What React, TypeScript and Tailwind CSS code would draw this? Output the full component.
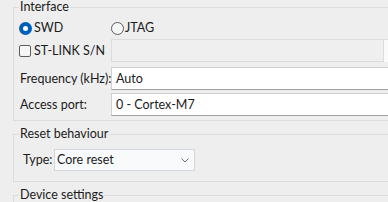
import React from "react";

function Radio({ checked }: { checked: boolean }) {
  return checked ? (
    <span className="flex h-[13px] w-[13px] shrink-0 items-center justify-center rounded-full bg-[#005fb8]">
      <span className="h-[5px] w-[5px] rounded-full bg-white" />
    </span>
  ) : (
    <span className="h-[13px] w-[13px] shrink-0 rounded-full border border-[#5d5d5d] bg-[#f6f6f6]" />
  );
}

export default function App() {
  return (
    <div className="h-[202px] w-[388px] overflow-hidden bg-[#eeeeee] font-['Lato',sans-serif] text-[12.5px] leading-[16px] text-[#1b1b1b]">
      <div className="-mt-[1px] flex w-[460px] flex-col gap-[5px] pl-[13px]">
        <fieldset className="border border-[#dcdcdc] px-[5px] pb-[4px]">
          <legend className="px-[1px]">Interface</legend>
          <div className="mt-[5px] grid grid-cols-[92px_1fr] items-center">
            <div className="flex h-[16px] items-center gap-[2px]">
              <Radio checked />
              <span>SWD</span>
            </div>
            <div className="flex h-[16px] items-center gap-[1px]">
              <Radio checked={false} />
              <span>JTAG</span>
            </div>
          </div>
          <div className="mt-[3px] grid grid-cols-[92px_1fr] items-center">
            <div className="flex items-center gap-[3px]">
              <span className="h-[12px] w-[12px] shrink-0 rounded-[2px] border border-[#5d5d5d] bg-[#f6f6f6]" />
              <span className="whitespace-nowrap">ST-LINK S/N</span>
            </div>
            <div className="flex h-[23px]">
              <div className="h-[23px] w-[273px] border border-[#dcdcdc] bg-[#efefef]" />
              <div className="h-[23px] flex-1 border-t border-[#dcdcdc] bg-[#fafafa]" />
            </div>
          </div>
          <div className="mt-[5px] grid grid-cols-[92px_1fr] items-center">
            <span className="whitespace-nowrap pl-[1px]">Frequency (kHz):</span>
            <div className="flex h-[23px] items-center border border-[#d0d0d0] border-b-[#a0a0a0] bg-white pl-[4px]">
              Auto
            </div>
          </div>
          <div className="mt-[3px] grid grid-cols-[92px_1fr] items-center">
            <span className="whitespace-nowrap pl-[1px]">Access port:</span>
            <div className="flex h-[23px] items-center border border-[#d0d0d0] border-b-[#a0a0a0] bg-white pl-[4px]">
              0 - Cortex-M7
            </div>
          </div>
        </fieldset>

        <fieldset className="border border-[#dcdcdc] px-[5px] pb-[10px]">
          <legend className="px-[1px]">Reset behaviour</legend>
          <div className="mt-[7px] flex items-center pl-[4px]">
            <span className="w-[31px]">Type:</span>
            <div className="flex h-[22px] w-[141px] items-center justify-between border border-[#d3d6da] bg-[#f9fafc] pl-[2px] pr-[5px]">
              <span>Core reset</span>
              <svg width="8" height="5" viewBox="0 0 8 5" fill="none">
                <path d="M0.5 0.5 L4 4 L7.5 0.5" stroke="#6b6b6b" strokeWidth="1" />
              </svg>
            </div>
          </div>
        </fieldset>

        <fieldset className="h-[60px] border border-[#dcdcdc] px-[5px]">
          <legend className="px-[1px]">Device settings</legend>
        </fieldset>
      </div>
    </div>
  );
}
